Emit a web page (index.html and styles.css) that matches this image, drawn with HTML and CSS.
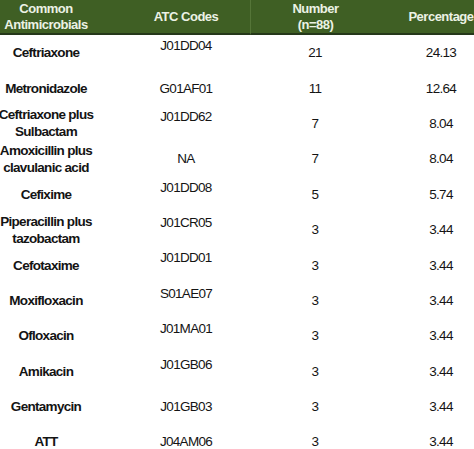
FILE: index.html
```html
<!DOCTYPE html>
<html lang="en">
<head>
    <meta charset="UTF-8">
    <meta name="viewport" content="width=device-width, initial-scale=1.0">
    <title>Common Antimicrobials</title>
    <link rel="stylesheet" href="styles.css">
</head>
<body>
    <div class="drug-table">
        <div class="th">Common<br>Antimicrobials</div>
        <div class="th code">ATC Codes</div>
        <div class="th num split">Number<br>(n=88)</div>
        <div class="th">Percentage</div>

        <div class="name">Ceftriaxone</div><div class="code up">J01DD04</div><div class="num">21</div><div>24.13</div>
        <div class="name">Metronidazole</div><div class="code">G01AF01</div><div class="num">11</div><div>12.64</div>
        <div class="name">Ceftriaxone plus<br>Sulbactam</div><div class="code up">J01DD62</div><div class="num">7</div><div>8.04</div>
        <div class="name">Amoxicillin plus<br>clavulanic acid</div><div class="code">NA</div><div class="num">7</div><div>8.04</div>
        <div class="name">Cefixime</div><div class="code up">J01DD08</div><div class="num">5</div><div>5.74</div>
        <div class="name">Piperacillin plus<br>tazobactam</div><div class="code up">J01CR05</div><div class="num">3</div><div>3.44</div>
        <div class="name">Cefotaxime</div><div class="code up">J01DD01</div><div class="num">3</div><div>3.44</div>
        <div class="name">Moxifloxacin</div><div class="code up">S01AE07</div><div class="num">3</div><div>3.44</div>
        <div class="name">Ofloxacin</div><div class="code up">J01MA01</div><div class="num">3</div><div>3.44</div>
        <div class="name">Amikacin</div><div class="code up">J01GB06</div><div class="num">3</div><div>3.44</div>
        <div class="name">Gentamycin</div><div class="code">J01GB03</div><div class="num">3</div><div>3.44</div>
        <div class="name">ATT</div><div class="code">J04AM06</div><div class="num">3</div><div>3.44</div>
    </div>
</body>
</html>
```

FILE: styles.css
```css
body {
    margin: 0;
    padding: 0;
    overflow: hidden;
    background: #fff;
    font-family: "Liberation Sans", Arial, sans-serif;
}
.drug-table {
    display: grid;
    grid-template-columns: 100px 154px 100px 182px;
    grid-template-rows: 35px;
    grid-auto-rows: 35.4px;
    width: 536px;
    margin-left: -4px;
    font-size: 13.5px;
    letter-spacing: -0.7px;
    color: #141414;
}
.drug-table > div {
    display: flex;
    align-items: center;
    justify-content: center;
    text-align: center;
    line-height: 17px;
    white-space: nowrap;
}
.drug-table > .th {
    box-sizing: border-box;
    background-color: #3f5f24;
    color: #ecf2e4;
    font-size: 13px;
    font-weight: bold;
    line-height: 16px;
    letter-spacing: -0.5px;
    border-bottom: 2px solid #25381a;
}
.drug-table > .split {
    border-left: 1px solid #557538;
}
.drug-table > .name {
    font-weight: bold;
}
.drug-table > .code {
    padding-left: 26px;
}
.drug-table > .num {
    padding-left: 30px;
}
.drug-table > .up {
    align-items: flex-start;
    padding-top: 2px;
}
```
